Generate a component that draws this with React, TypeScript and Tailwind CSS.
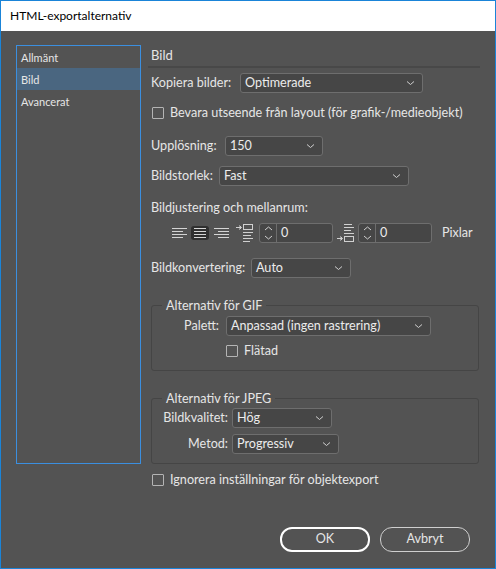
import React from "react";

const font = { fontFamily: "Lato, 'Liberation Sans', sans-serif" };

function Chevron() {
  return (
    <svg width="9" height="6" viewBox="0 0 9 6" className="shrink-0">
      <path d="M1 1.5 L4.5 4.5 L8 1.5" fill="none" stroke="#d0d0d0" strokeWidth="1" />
    </svg>
  );
}

function Select({ value, w }: { value: string; w: string }) {
  return (
    <div
      className={`${w} h-[20px] rounded-[3px] border border-[#6e6e6e] bg-[#464646] flex items-center justify-between pl-[4px] pr-[7px] text-[#ececec]`}
    >
      <span>{value}</span>
      <Chevron />
    </div>
  );
}

function Check({ label }: { label: string }) {
  return (
    <div className="flex items-center h-[14px]">
      <div className="w-[12px] h-[12px] rounded-[1px] border border-[#b4b4b4]" />
      <span className="ml-[6px]">{label}</span>
    </div>
  );
}

function Spinner() {
  return (
    <div className="w-[74px] h-[20px] rounded-[3px] border border-[#6e6e6e] bg-[#464646] flex items-stretch">
      <div className="w-[17px] flex flex-col items-center justify-center gap-[4px] border-r border-[#6e6e6e]">
        <svg width="9" height="5" viewBox="0 0 9 5">
          <path d="M1 4 L4.5 1 L8 4" fill="none" stroke="#cfcfcf" strokeWidth="1" />
        </svg>
        <svg width="9" height="5" viewBox="0 0 9 5">
          <path d="M1 1 L4.5 4 L8 1" fill="none" stroke="#cfcfcf" strokeWidth="1" />
        </svg>
      </div>
      <div className="flex items-center pl-[4px] text-[#ececec]">0</div>
    </div>
  );
}

function AlignIcon({ kind, selected }: { kind: "l" | "c" | "r"; selected?: boolean }) {
  const ys = [1.5, 4.5, 7.5, 10.5];
  const lines =
    kind === "c"
      ? ys.map((y) => [3, y, 15, y])
      : kind === "l"
      ? ys.map((y, i) => [1, y, i % 2 === 0 ? 16 : 12, y])
      : ys.map((y, i) => [i % 2 === 0 ? 2 : 6, y, 17, y]);
  return (
    <div
      className={`w-[18px] h-[14px] flex items-center justify-center rounded-[3px] ${
        selected ? "bg-[#2f2f2f]" : ""
      }`}
    >
      <svg width="18" height="12" viewBox="0 0 18 12">
        {lines.map((l, i) => (
          <line key={i} x1={l[0]} y1={l[1]} x2={l[2]} y2={l[3]} stroke="#d4d4d4" strokeWidth="1" />
        ))}
      </svg>
    </div>
  );
}

function SpaceBeforeIcon() {
  return (
    <svg width="18" height="18" viewBox="0 0 18 18">
      <path d="M0 3.5 H5" stroke="#d0d0d0" strokeWidth="1" />
      <path d="M3.5 1.5 L5.5 3.5 L3.5 5.5" fill="#d0d0d0" stroke="#d0d0d0" strokeWidth="1" />
      <rect x="7.5" y="0.5" width="9" height="5" fill="none" stroke="#d0d0d0" strokeWidth="1" />
      <path d="M7 8.5 H17 M7 11.5 H15 M7 14.5 H17 M7 17.5 H14" stroke="#d0d0d0" strokeWidth="1" />
    </svg>
  );
}

function SpaceAfterIcon() {
  return (
    <svg width="18" height="18" viewBox="0 0 18 18">
      <path d="M7 0.5 H15 M7 3.5 H17 M7 6.5 H14 M7 9.5 H17" stroke="#d0d0d0" strokeWidth="1" />
      <path d="M0 14.5 H5" stroke="#d0d0d0" strokeWidth="1" />
      <path d="M3.5 12.5 L5.5 14.5 L3.5 16.5" fill="#d0d0d0" stroke="#d0d0d0" strokeWidth="1" />
      <rect x="7.5" y="12.5" width="9" height="5" fill="none" stroke="#d0d0d0" strokeWidth="1" />
    </svg>
  );
}

export default function App() {
  return (
    <div
      style={font}
      className="w-[496px] h-[569px] border border-[#1a84d8] flex flex-col text-[12.6px] leading-none overflow-hidden"
    >
      <div className="h-[30px] bg-white flex items-center pl-[9px] text-black text-[12px]">
        HTML-exportalternativ
      </div>
      <div className="flex-1 bg-[#535353] flex pt-[14px] pl-[15px] text-[#e6e6e6]">
        <div className="w-[125px] h-[419px] border border-[#3b8fe0] flex flex-col text-[11px]">
          <div className="h-[22px] flex items-center pl-[4px]">Allmänt</div>
          <div className="h-[22px] flex items-center pl-[4px] bg-[#4a6680]">Bild</div>
          <div className="h-[22px] flex items-center pl-[4px]">Avancerat</div>
        </div>
        <div className="ml-[7px] w-[332px] flex flex-col">
          <div className="h-[20px] flex items-center pl-[3px] text-[13px]">Bild</div>
          <div className="mt-[1px] h-[2px] bg-[#484848]" />
          <div className="mt-[5px] flex items-center pl-[3px]">
            <span className="w-[89px]">Kopiera bilder:</span>
            <Select value="Optimerade" w="w-[183px]" />
          </div>
          <div className="mt-[13px] pl-[4px]">
            <Check label="Bevara utseende från layout (för grafik-/medieobjekt)" />
          </div>
          <div className="mt-[16px] flex items-center pl-[3px]">
            <span className="w-[74px]">Upplösning:</span>
            <Select value="150" w="w-[98px]" />
          </div>
          <div className="mt-[10px] flex items-center pl-[3px]">
            <span className="w-[68px]">Bildstorlek:</span>
            <Select value="Fast" w="w-[190px]" />
          </div>
          <div className="mt-[13px] h-[18px] flex items-center pl-[3px]">Bildjustering och mellanrum:</div>
          <div className="mt-[6px] h-[20px] flex items-center pl-[23px]">
            <AlignIcon kind="l" />
            <div className="ml-[2px]">
              <AlignIcon kind="c" selected />
            </div>
            <div className="ml-[3px]">
              <AlignIcon kind="r" />
            </div>
            <div className="ml-[6px]">
              <SpaceBeforeIcon />
            </div>
            <div className="ml-[5px]">
              <Spinner />
            </div>
            <div className="ml-[4px]">
              <SpaceAfterIcon />
            </div>
            <div className="ml-[3px]">
              <Spinner />
            </div>
            <span className="ml-[10px]">Pixlar</span>
          </div>
          <div className="mt-[15px] flex items-center pl-[3px]">
            <span className="w-[100px]">Bildkonvertering:</span>
            <Select value="Auto" w="w-[100px]" />
          </div>
          <div className="mt-[27px] ml-[3px] w-[328px] h-[66px] rounded-[3px] border border-[#454545] relative">
            <div className="absolute -top-[7px] left-[10px] px-[4px] bg-[#535353] h-[14px] flex items-center">
              Alternativ för GIF
            </div>
            <div className="mt-[10px] flex items-center">
              <span className="w-[74px] text-right pr-[7px]">Palett:</span>
              <Select value="Anpassad (ingen rastrering)" w="w-[205px]" />
            </div>
            <div className="mt-[8px] pl-[74px]">
              <Check label="Flätad" />
            </div>
          </div>
          <div className="mt-[27px] ml-[3px] w-[328px] h-[66px] rounded-[3px] border border-[#454545] relative">
            <div className="absolute -top-[7px] left-[10px] px-[4px] bg-[#535353] h-[14px] flex items-center">
              Alternativ för JPEG
            </div>
            <div className="mt-[9px] flex items-center">
              <span className="w-[80px] text-right pr-[4px]">Bildkvalitet:</span>
              <Select value="Hög" w="w-[100px]" />
            </div>
            <div className="mt-[6px] flex items-center">
              <span className="w-[80px] text-right pr-[4px]">Metod:</span>
              <Select value="Progressiv" w="w-[107px]" />
            </div>
          </div>
          <div className="mt-[9px] pl-[4px]">
            <Check label="Ignorera inställningar för objektexport" />
          </div>
          <div className="mt-[40px] flex justify-end gap-[10px] pr-[10px]">
            <div className="w-[90px] h-[25px] rounded-[12px] border-2 border-white flex items-center justify-center">
              OK
            </div>
            <div className="w-[90px] h-[25px] rounded-[12px] border border-[#cfcfcf] flex items-center justify-center">
              Avbryt
            </div>
          </div>
        </div>
      </div>
    </div>
  );
}
